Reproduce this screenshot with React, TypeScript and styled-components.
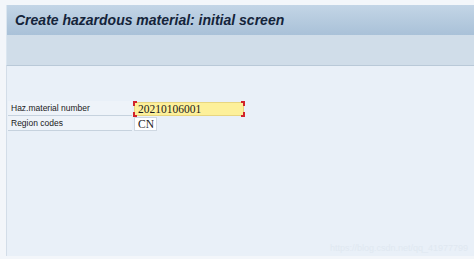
import styled, { createGlobalStyle } from 'styled-components'

const Global = createGlobalStyle`
  html, body {
    margin: 0;
    padding: 0;
    background: #f2f6fa;
  }
  #root {
    width: 474px;
    height: 259px;
    overflow: hidden;
  }
`

const Screen = styled.div`
  box-sizing: border-box;
  width: 474px;
  height: 259px;
  padding: 5px 0 3px 6px;
  display: flex;
  flex-direction: column;
  background: #f3f6fa;
`

const TitleBar = styled.div`
  height: 30px;
  display: flex;
  align-items: center;
  padding-left: 8px;
  background: linear-gradient(#c3d5e6, #a9c1d8);
  border-left: 1px solid #dbe6f0;
`

const Title = styled.h1`
  margin: 0;
  font-family: 'Liberation Sans', Arial, sans-serif;
  font-size: 14px;
  font-weight: bold;
  font-style: italic;
  color: #14243a;
`

const Toolbar = styled.div`
  height: 30px;
  background: #d0dde9;
  border-left: 1px solid #dbe6f0;
  border-bottom: 1px solid #b9c9d8;
`

const Content = styled.div`
  flex: 1;
  position: relative;
  padding: 35px 0 0 1px;
  background: #e9f0f8;
  border-left: 1px solid #d3dde8;
`

const FieldRow = styled.div`
  display: flex;
  align-items: center;
  height: 15px;
`

const Label = styled.div`
  box-sizing: border-box;
  width: 124px;
  height: 15px;
  padding-left: 3px;
  display: flex;
  align-items: center;
  font-family: 'Liberation Sans', Arial, sans-serif;
  font-size: 8.5px;
  color: #1a1a1a;
  background: #eef3f9;
  border-bottom: 1px solid #c6d2de;
`

const Input = styled.div<{ $width: number; $required?: boolean }>`
  position: relative;
  box-sizing: border-box;
  width: ${(p) => p.$width}px;
  height: 14px;
  margin-left: 2px;
  padding-left: 3px;
  display: flex;
  align-items: center;
  font-family: 'Liberation Serif', 'Times New Roman', serif;
  font-size: 11.5px;
  color: #1a1a1a;
  background: ${(p) => (p.$required ? '#fdf09a' : '#ffffff')};
  border: 1px solid ${(p) => (p.$required ? '#e8d680' : '#cfd8e2')};
`

const Corner = styled.span<{ $h: 'left' | 'right'; $v: 'top' | 'bottom' }>`
  position: absolute;
  box-sizing: border-box;
  width: 4px;
  height: 5px;
  ${(p) => p.$h}: -2px;
  ${(p) => p.$v}: -2px;
  border-${(p) => p.$h}: 2px solid #d2232a;
  border-${(p) => p.$v}: 2px solid #d2232a;
`

const Watermark = styled.div`
  position: absolute;
  right: 6px;
  bottom: 3px;
  font-family: 'Liberation Sans', Arial, sans-serif;
  font-size: 9px;
  color: #e0e8f1;
`

export default function App() {
  return (
    <>
      <Global />
      <Screen>
        <TitleBar>
          <Title>Create hazardous material: initial screen</Title>
        </TitleBar>
        <Toolbar />
        <Content>
          <FieldRow>
            <Label>Haz.material number</Label>
            <Input $width={110} $required>
              20210106001
              <Corner $h="left" $v="top" />
              <Corner $h="left" $v="bottom" />
              <Corner $h="right" $v="top" />
              <Corner $h="right" $v="bottom" />
            </Input>
          </FieldRow>
          <FieldRow>
            <Label>Region codes</Label>
            <Input $width={23}>CN</Input>
          </FieldRow>
          <Watermark>https://blog.csdn.net/qq_41977799</Watermark>
        </Content>
      </Screen>
    </>
  )
}
